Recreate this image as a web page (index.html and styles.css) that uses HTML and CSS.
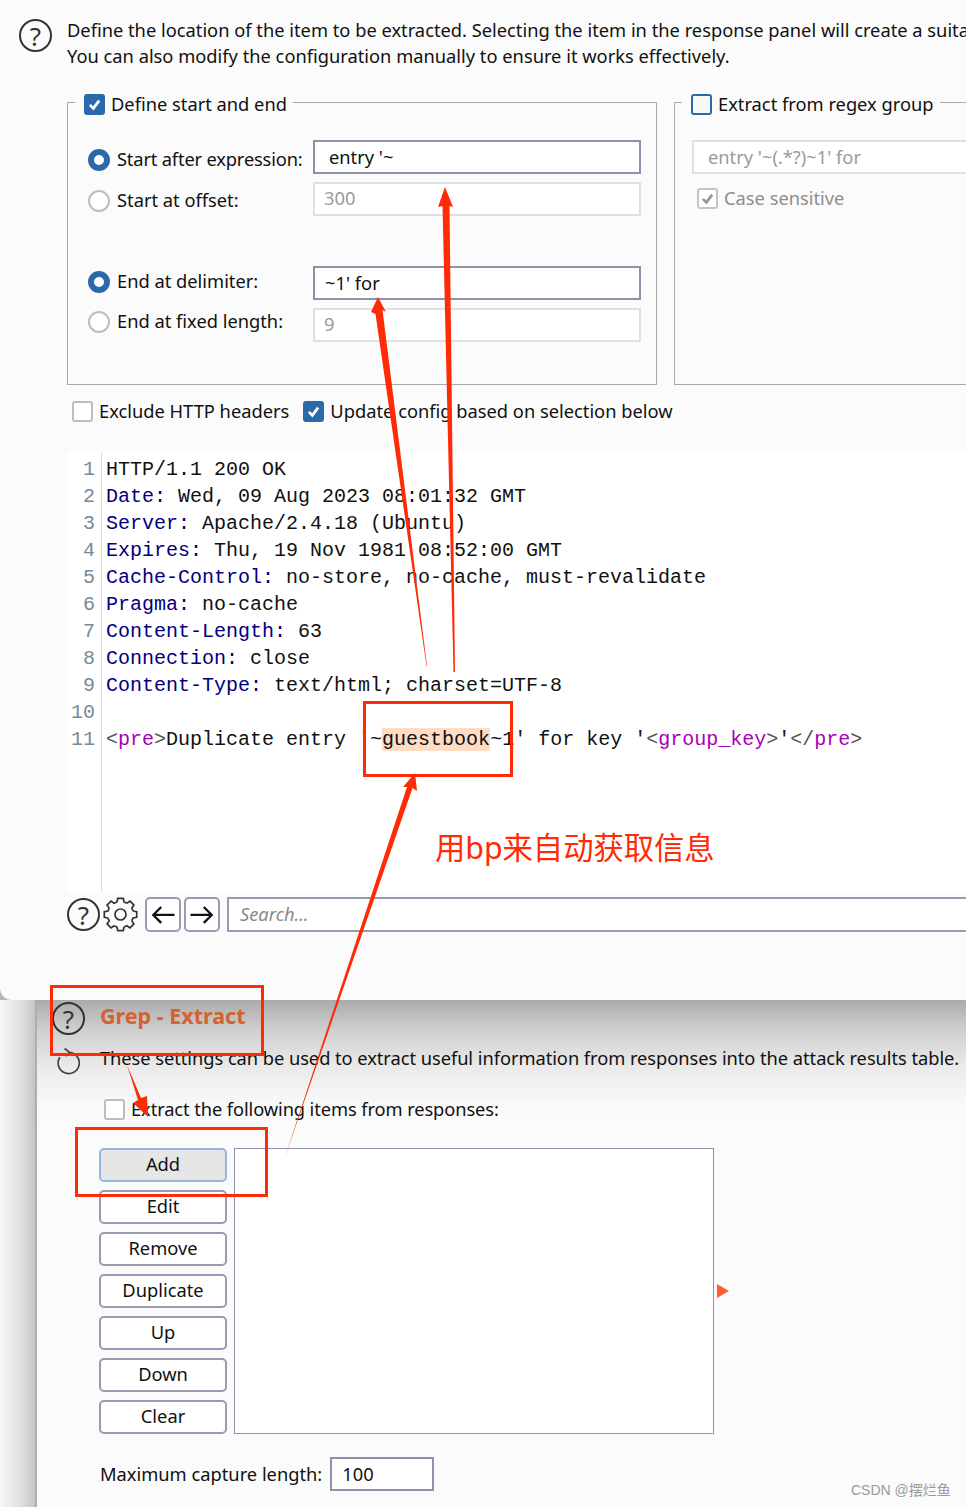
FILE: index.html
```html
<!DOCTYPE html>
<html lang="en">
<head>
<meta charset="utf-8">
<title>Grep - Extract</title>
<link rel="stylesheet" href="styles.css">
</head>
<body>
<svg width="0" height="0" class="defs">
  <defs>
    <g id="gear-seg"><path d="M-3.5 -12.5L-2.8 -16.2H2.8L3.5 -12.5L6.4 -11.3" fill="none" stroke="#333" stroke-width="1.7"/></g>
    <symbol id="tick" viewBox="0 0 22 22"><path d="M5 11.500L9.500 16L17 6" fill="none" stroke="currentColor" stroke-width="3.600"/></symbol>
  </defs>
</svg>

<section class="top">
  <div class="intro">
    <span class="help">?</span>
    <p class="intro-text">Define the location of the item to be extracted. Selecting the item in the response panel will create a suita<br>You can also modify the configuration manually to ensure it works effectively.</p>
  </div>

  <div class="groups">
    <div class="group group-left">
      <div class="legend legend-left"><span class="check on"><svg class="tick"><use href="#tick"/></svg></span><span>Define start and end</span></div>
      <div class="fields">
        <label class="opt lower"><span class="radio on"></span><span class="opt-label tight">Start after expression:</span></label>
        <div class="input active pad-l">entry '~</div>
        <label class="opt lower-s"><span class="radio"></span><span class="opt-label">Start at offset:</span></label>
        <div class="input off">300</div>
        <label class="opt upper-s sep"><span class="radio on"></span><span class="opt-label">End at delimiter:</span></label>
        <div class="input active sep pad-m">~1' for</div>
        <label class="opt upper"><span class="radio"></span><span class="opt-label">End at fixed length:</span></label>
        <div class="input off">9</div>
      </div>
    </div>
    <div class="group group-right">
      <div class="legend legend-right"><span class="check blue"></span><span>Extract from regex group</span></div>
      <div class="input off regex">entry '~(.*?)~1' for</div>
      <div class="case"><span class="check grey"><svg class="tick"><use href="#tick"/></svg></span><span>Case sensitive</span></div>
    </div>
  </div>

  <div class="options">
    <span class="check plain"></span><span class="opt-text">Exclude HTTP headers</span>
    <span class="check on second"><svg class="tick"><use href="#tick"/></svg></span><span class="opt-text">Update config based on selection below</span>
  </div>

  <div class="code">
    <ol class="gutter">
      <li>1</li><li>2</li><li>3</li><li>4</li><li>5</li><li>6</li><li>7</li><li>8</li><li>9</li><li>10</li><li>11</li>
    </ol>
    <pre class="lines">HTTP/1.1 200 OK
<span class="k">Date:</span> Wed, 09 Aug 2023 08:01:32 GMT
<span class="k">Server:</span> Apache/2.4.18 (Ubuntu)
<span class="k">Expires:</span> Thu, 19 Nov 1981 08:52:00 GMT
<span class="k">Cache-Control:</span> no-store, no-cache, must-revalidate
<span class="k">Pragma:</span> no-cache
<span class="k">Content-Length:</span> 63
<span class="k">Connection:</span> close
<span class="k">Content-Type:</span> text/html; charset=UTF-8

<span class="b">&lt;</span><span class="t">pre</span><span class="b">&gt;</span>Duplicate entry '~<mark class="hit">guestbook</mark>~1' for key '<span class="b">&lt;</span><span class="t">group_key</span><span class="b">&gt;</span>'<span class="b">&lt;/</span><span class="t">pre</span><span class="b">&gt;</span></pre>
  </div>

  <div class="toolbar">
    <span class="help">?</span>
    <svg class="gear" viewBox="-17.5 -17.5 35 35">
      <use href="#gear-seg"/>
      <use href="#gear-seg" transform="rotate(45)"/>
      <use href="#gear-seg" transform="rotate(90)"/>
      <use href="#gear-seg" transform="rotate(135)"/>
      <use href="#gear-seg" transform="rotate(180)"/>
      <use href="#gear-seg" transform="rotate(225)"/>
      <use href="#gear-seg" transform="rotate(270)"/>
      <use href="#gear-seg" transform="rotate(315)"/>
      <circle r="5.5" fill="none" stroke="#333" stroke-width="1.7"/>
    </svg>
    <span class="nav nav-back"><svg viewBox="0 0 36 35" class="nav-icon"><path d="M31 18H8M16 9L7 18L16 27" fill="none" stroke="#111" stroke-width="2.6"/></svg></span>
    <span class="nav nav-next"><svg viewBox="0 0 36 35" class="nav-icon"><path d="M5 18H28M20 9L29 18L20 27" fill="none" stroke="#111" stroke-width="2.6"/></svg></span>
    <div class="search">Search...</div>
  </div>
</section>

<section class="bottom">
  <div class="strip"></div>
  <div class="main">
    <div class="title-row">
      <span class="help">?</span>
      <h2 class="title">Grep - Extract</h2>
    </div>
    <div class="desc-row">
      <svg class="refresh" viewBox="0 0 26 30"><path d="M13 5.5A11 11 0 1 1 4 10.5M9 1.5L14 5.5L10 9.5" fill="none" stroke="#444" stroke-width="1.8"/></svg>
      <p class="desc">These settings can be used to extract useful information from responses into the attack results table.</p>
    </div>
    <div class="enable-row"><span class="check plain"></span><span class="enable-text">Extract the following items from responses:</span></div>
    <div class="list-row">
      <div class="buttons">
        <button class="btn btn-focus">Add</button>
        <button class="btn">Edit</button>
        <button class="btn">Remove</button>
        <button class="btn">Duplicate</button>
        <button class="btn">Up</button>
        <button class="btn">Down</button>
        <button class="btn">Clear</button>
      </div>
      <div class="listbox"></div>
      <span class="play"></span>
    </div>
    <div class="max-row"><span>Maximum capture length:</span><div class="input active max">100</div></div>
  </div>
</section>

<svg class="marks" width="966" height="1507" viewBox="0 0 966 1507">
  <g fill="none" stroke="#ff2a06" stroke-width="3">
    <rect x="364.500" y="702.500" width="147" height="73"/>
    <rect x="51.500" y="986.500" width="211" height="68"/>
    <rect x="76.500" y="1128.500" width="190" height="67"/>
  </g>
  <g fill="#ff2a06">
    <path d="M445 187L453 207L449.500 206L455 672L453.500 672L442.500 206L438 207Z"/>
    <path d="M378 297L386 312L382.500 310L427 666L426.500 666L375.500 314L371 312Z"/>
    <path d="M415 773L417 791L412.500 788L284 1160L407 787L403 787Z"/>
    <path d="M127 1065L141 1098L147 1096L148 1117L133 1103L138 1100Z"/>
  </g>
</svg>
<div class="note">用bp来自动获取信息</div>
<div class="watermark">CSDN @摆烂鱼</div>
</body>
</html>
```

FILE: styles.css
```css
* { box-sizing: border-box; }
html, body { margin: 0; padding: 0; }
body {
  position: relative;
  width: 966px;
  height: 1507px;
  overflow: hidden;
  background: #b4b4b4;
  color: #111;
  font: 18.3px/26px "Noto Sans", "Noto Sans CJK SC", sans-serif;
}
p, h2, ol, pre { margin: 0; padding: 0; }
.defs { position: absolute; }

.top {
  position: relative;
  z-index: 1;
  height: 1000px;
  overflow: hidden;
  background: #fbfbfb;
  border-bottom-left-radius: 12px;
}
.intro { display: flex; gap: 15px; padding: 17px 0 0 19px; }
.intro-text { white-space: nowrap; }
.help {
  flex: none;
  display: flex;
  align-items: center;
  justify-content: center;
  width: 33px;
  height: 33px;
  border: 2px solid #333;
  border-radius: 50%;
  font-size: 26px;
  line-height: 1;
  color: #333;
}
.intro .help { margin-top: 2px; }

.groups { display: flex; gap: 17px; margin: 33px 0 0 67px; }
.group {
  position: relative;
  flex: none;
  height: 283px;
  border: 1px solid #a8a8a8;
}
.group-left { width: 590px; padding: 37px 0 0 20px; }
.group-right { width: 400px; padding: 37px 0 0 17px; }
.legend {
  position: absolute;
  top: -12px;
  left: 7px;
  display: flex;
  align-items: center;
  gap: 6px;
  height: 26px;
  padding: 0 6px 0 9px;
  background: #fbfbfb;
  white-space: nowrap;
}

.check {
  flex: none;
  display: block;
  width: 21px;
  height: 21px;
  border: 2px solid #bdbdbd;
  border-radius: 3px;
  background: #fff;
  color: #fff;
}
.check.on { background: #2a6aa8; border-color: #2a6aa8; }
.check.blue { background: #f8f8f8; border-color: #2a6aa8; }
.check.grey { border-color: #c4c4c4; color: #9a9a9a; }
.tick { display: block; width: 17px; height: 17px; }

.radio {
  flex: none;
  display: block;
  width: 22px;
  height: 22px;
  border: 2px solid #bdbdbd;
  border-radius: 50%;
  background: #fff;
  margin-right: 7px;
}
.radio.on { border: 6px solid #2a6aa8; }

.fields {
  display: grid;
  grid-template-columns: 225px 328px;
  grid-template-rows: 34px 34px 76px 34px;
  row-gap: 8px;
}
.opt { display: flex; align-items: center; white-space: nowrap; }
.opt-label { padding-bottom: 2px; }
.tight { letter-spacing: -0.17px; }
.lower { padding-top: 5px; }
.lower-s { padding-top: 3px; }
.upper-s { padding-bottom: 2px; }
.upper { padding-bottom: 6px; }
.sep { margin-top: 42px; height: 34px; }
.input {
  height: 34px;
  padding: 0 10px;
  background: #fff;
  white-space: nowrap;
  line-height: 30px;
}
.input.active { border: 2px solid #9090a8; }
.input.off { border: 2px solid #e0e0e0; color: #9a9a9a; line-height: 28px; padding-left: 9px; }
.pad-l { padding-left: 14px; }
.pad-m { padding-left: 10px; }
.input.regex { width: 380px; padding-left: 14px; line-height: 30px; }
.case { display: flex; align-items: center; gap: 6px; margin: 11px 0 0 5px; color: #8e8e8e; }

.options {
  display: flex;
  align-items: center;
  height: 26px;
  margin: 13px 0 0 72px;
  white-space: nowrap;
}
.opt-text { margin-left: 6px; }
.second { margin-left: 14px; }

.code {
  display: flex;
  height: 440px;
  margin: 28px 0 0 67px;
  background: #fff;
  font: 20px/27px "Liberation Mono", "DejaVu Sans Mono", monospace;
}
.gutter {
  flex: none;
  width: 35px;
  padding: 4px 6px 0 0;
  border-right: 1px solid #ddd;
  list-style: none;
  text-align: right;
  color: #78899a;
}
.lines { padding: 4px 0 0 4px; font: inherit; color: #111; white-space: pre; }
.k { color: #000080; }
.b { color: #555; }
.t { color: #a800b8; }
.hit { background: #ffdcc4; color: inherit; }

.toolbar { display: flex; align-items: center; height: 35px; margin: 5px 0 0 67px; }
.gear { flex: none; width: 35px; height: 35px; margin-left: 3px; }
.nav {
  flex: none;
  display: block;
  width: 36px;
  height: 35px;
  border: 2px solid #9a9ab0;
  border-radius: 5px;
  background: #fff;
}
.nav-back { margin-left: 7px; }
.nav-next { margin-left: 3px; }
.nav-icon { display: block; width: 32px; height: 31px; }
.search {
  flex: none;
  width: 760px;
  height: 35px;
  margin-left: 7px;
  padding-left: 11px;
  border: 2px solid #9a9ab0;
  background: #fff;
  color: #8a8a8a;
  font-style: italic;
  line-height: 29px;
}

.bottom { display: flex; height: 507px; }
.strip {
  flex: none;
  width: 37px;
  border-right: 2px solid #aeaeae;
  background: linear-gradient(90deg, #f6f6f6 0, #e0e0e0 60%, #c4c4c4 100%);
}
.main {
  flex: 1;
  min-width: 0;
  background: linear-gradient(180deg, #ababab 0, #cfcfcf 30px, #e9e9e9 65px, #f9f9f9 105px, #fbfbfb 130px);
  overflow: hidden;
}
.title-row { display: flex; align-items: center; gap: 15px; height: 33px; margin: 2px 0 0 15px; }
.title { padding-bottom: 6px; font-size: 21.5px; font-weight: 700; color: #d2622f; line-height: 28px; }
.desc-row { display: flex; align-items: center; height: 28px; margin: 9px 0 0 19px; }
.refresh { flex: none; width: 25px; height: 29px; margin-top: 6px; }
.desc { margin-left: 19px; white-space: nowrap; letter-spacing: -0.05px; }
.enable-row { display: flex; align-items: center; gap: 6px; height: 26px; margin: 24px 0 0 67px; }
.enable-text { letter-spacing: -0.1px; }
.list-row { display: flex; align-items: center; margin: 26px 0 0 62px; }
.buttons { flex: none; display: flex; flex-direction: column; gap: 8px; width: 128px; }
.btn {
  display: block;
  width: 128px;
  height: 34px;
  padding: 0 0 2px;
  border: 2px solid #9a9ab0;
  border-radius: 5px;
  background: #fff;
  color: #111;
  font: inherit;
}
.btn-focus { background: #e6e6e6; border-color: #93b7de; }
.listbox {
  flex: none;
  width: 480px;
  height: 286px;
  margin-left: 7px;
  border: 1px solid #9090a8;
  background: #fff;
}
.play {
  flex: none;
  width: 0;
  height: 0;
  margin-left: 3px;
  border-left: 12px solid #ff6030;
  border-top: 7.5px solid transparent;
  border-bottom: 7.5px solid transparent;
}
.max-row { display: flex; align-items: center; gap: 8px; margin: 23px 0 0 63px; white-space: nowrap; }
.input.max { width: 104px; }

.marks { position: absolute; z-index: 2; top: 0; left: 0; pointer-events: none; }
.note {
  position: absolute;
  z-index: 2;
  top: 826px;
  left: 435px;
  color: #ff2a06;
  font-size: 30.3px;
  line-height: 44px;
  white-space: nowrap;
}
.watermark {
  position: absolute;
  z-index: 2;
  top: 1480px;
  left: 851px;
  color: #9a9a9a;
  font: 14px/20px "Liberation Sans", "Noto Sans CJK SC", sans-serif;
  white-space: nowrap;
}
```
